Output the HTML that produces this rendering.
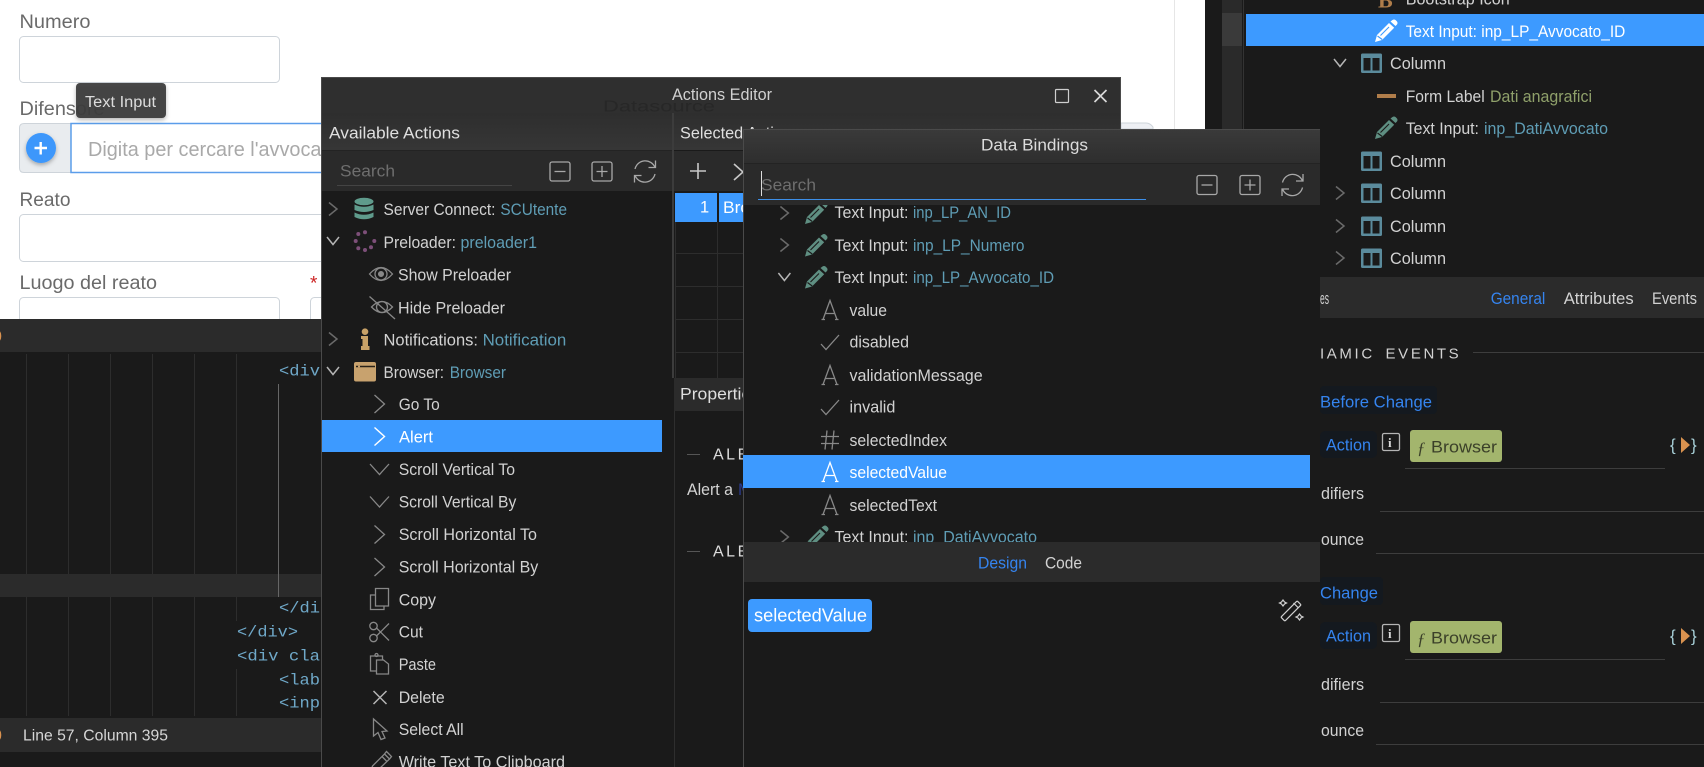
<!DOCTYPE html>
<html lang="it">
<head>
<meta charset="utf-8">
<title>Actions Editor</title>
<style>
html,body{margin:0;padding:0;background:#1a1a1a;width:1704px;height:767px;overflow:hidden}
svg{display:block}
text{font-family:"Liberation Sans",sans-serif;font-size:16.5px;fill:#d2d2d2;transform:translateY(-.7px)}
.n{fill:#5f9db5}
.m{font-family:"Liberation Mono",monospace;font-size:16px;fill:#6fa8c8}
.f{font-size:19px;fill:#6a6a6a;transform:none}
.b{fill:#3584ef}
.ic{fill:none;stroke:#a8a8a8;stroke-width:1.3}
.ch{fill:none;stroke:#6a6a6a;stroke-width:1.5}
.cho{fill:none;stroke:#b5b5b5;stroke-width:1.5}
.tl{fill:none;stroke:#888;stroke-width:1.3}
.ln{stroke:#3d3d3d;stroke-width:1}
.g{stroke:#2d2d2d;stroke-width:1}
</style>
</head>
<body>
<svg width="1704" height="767" viewBox="0 0 1704 767" xmlns="http://www.w3.org/2000/svg">
<defs>
<linearGradient id="tb" x1="0" y1="0" x2="0" y2="1"><stop offset="0" stop-color="#3a3a3a"/><stop offset="1" stop-color="#2e2e2e"/></linearGradient>
<linearGradient id="tb2" x1="0" y1="0" x2="0" y2="1"><stop offset="0" stop-color="#2e2e2e"/><stop offset="1" stop-color="#363636"/></linearGradient>
<filter id="sh" x="-20%" y="-20%" width="140%" height="150%"><feDropShadow dx="0" dy="2" stdDeviation="2" flood-color="#000" flood-opacity=".3"/></filter>
<g id="pencil">
<path fill="currentColor" d="M4.5-9.5 L6.5-11 Q8-12 9.5-11 L11-9.5 Q12-8 11-6.5 L9.5-5 Z"/>
<path fill="currentColor" d="M3-8 L8.2-3.2 L-4 9 L-11 11 L-9 4 Z"/>
<path fill="none" stroke="var(--b,#1a1a1a)" stroke-width="1.1" d="M-8.5 5 L-3.8 8.5 M3 -4 L-5.5 4.5"/>
</g>
<g id="col">
<rect x="-10.5" y="-9.5" width="21" height="19.5" rx="1.5" fill="#5b8b9c"/>
<rect x="-8" y="-5" width="7" height="12.5" fill="#1a1a1a"/>
<rect x="1" y="-5" width="7" height="12.5" fill="#1a1a1a"/>
</g>
<path id="cr" d="M-4-6.5 L4 0 L-4 6.5" />
<path id="cro" d="M-6-4 L0 3.5 L6-4" />
<path id="cr2" d="M-5-9 L5 0 L-5 9" />
<path id="cd2" d="M-9.5-5.5 L0 5 L9.5-5.5" />
<path id="A" d="M-7 9.5 L0-9.5 L7 9.5 M-4.6 3.5 H4.6 M-8.5 9.5 H-5 M5 9.5 H8.5" />
<path id="ck" d="M-9 2 L-4 7.5 L9-7" />
<path id="hash" d="M-3-9.5 L-5 9.5 M4-9.5 L2 9.5 M-9-3.5 H9 M-9 3.5 H9" />
<g id="minus"><rect x="-10" y="-9.5" width="20" height="19" rx="2"/><path d="M-5.5 0 H5.5"/></g>
<g id="plus"><rect x="-10" y="-9.5" width="20" height="19" rx="2"/><path d="M-5.5 0 H5.5 M0-5.5 V5.5"/></g>
<g id="ref"><path d="M10-4 A10.5 10.5 0 0 0-10-2.5 M10.5-11 V-4 H3.5 M-10 4 A10.5 10.5 0 0 0 10 2.5 M-10.5 11 V4 H-3.5"/></g>
</defs>

<!-- page background -->
<rect width="1704" height="767" fill="#1a1a1a"/>

<!-- white form -->
<rect x="0" y="0" width="1205" height="320" fill="#fff"/>
<path d="M1174.5 0 V130" stroke="#e6e6e6"/>
<text class="f" x="19.5" y="28" textLength="71" lengthAdjust="spacingAndGlyphs">Numero</text>
<rect x="19.5" y="36.5" width="260" height="46" rx="4" fill="#fff" stroke="#ced4da"/>
<text class="f" x="19.5" y="115" textLength="85" lengthAdjust="spacingAndGlyphs">Difensore</text>
<path d="M24 123.5 H71 V172.5 H24 Q19.5 172.5 19.5 168 V128 Q19.5 123.5 24 123.5Z" fill="#e9ecef" stroke="#ced4da"/>
<rect x="71" y="123.5" width="300" height="49" fill="#fff" stroke="#5b9dea" stroke-width="1.5"/>
<circle cx="41" cy="148" r="15" fill="#3d97fb" filter="url(#sh)"/>
<path d="M34.5 148 H47 M40.7 142 V154.5" stroke="#fff" stroke-width="2.4"/>
<text x="88" y="156.7" style="font-size:20px;fill:#a9a9a9" textLength="250" lengthAdjust="spacingAndGlyphs">Digita per cercare l'avvocato</text>
<text class="f" x="19.5" y="206" textLength="51" lengthAdjust="spacingAndGlyphs">Reato</text>
<rect x="19.5" y="214.5" width="340" height="47" rx="4" fill="#fff" stroke="#ced4da"/>
<text class="f" x="19.5" y="289" textLength="137.5" lengthAdjust="spacingAndGlyphs">Luogo del reato</text>
<rect x="19.5" y="297.5" width="260" height="46" rx="4" fill="#fff" stroke="#ced4da"/>
<text x="310" y="290" style="font-size:19px;fill:#c22">*</text>
<rect x="310.5" y="297.5" width="60" height="46" rx="4" fill="#fff" stroke="#ced4da"/>
<path d="M1121 129 V123 Q1121 123 1121 123 H1146 Q1150 123 1153 127 V129 Z" fill="#eef0f4" stroke="#ced4da"/>
<!-- tooltip -->
<rect x="76" y="83" width="90" height="35" rx="4" fill="#3c3c3c" fill-opacity=".94" filter="url(#sh)"/>
<text x="85" y="107.7" style="font-size:15.5px;fill:#dcdcdc" textLength="71" lengthAdjust="spacingAndGlyphs">Text Input</text>

<!-- code editor -->
<rect x="0" y="319" width="322" height="448" fill="#1a1a1a"/>
<rect x="0" y="319" width="322" height="33" fill="#2b2b2b"/>
<text x="-7" y="342" style="font-size:16px;fill:#d9924f">0</text>
<g class="g">
<path d="M26.5 354 V716 M68.5 354 V716 M110.5 354 V716 M152.5 354 V716 M194.5 354 V716 M236.5 354 V621 M236.5 669 V716"/>
</g>
<rect x="0" y="574" width="322" height="23" fill="#2b2b2b"/>
<path d="M278.5 384 V597" stroke="#666"/>
<text class="m" x="279" y="376" textLength="41" lengthAdjust="spacingAndGlyphs">&lt;div</text>
<text class="m" x="279" y="613" textLength="41" lengthAdjust="spacingAndGlyphs">&lt;/di</text>
<text class="m" x="237" y="637" textLength="61" lengthAdjust="spacingAndGlyphs">&lt;/div&gt;</text>
<text class="m" x="237" y="661" textLength="83" lengthAdjust="spacingAndGlyphs">&lt;div cla</text>
<text class="m" x="279" y="685" textLength="41" lengthAdjust="spacingAndGlyphs">&lt;lab</text>
<text class="m" x="279" y="708" textLength="41" lengthAdjust="spacingAndGlyphs">&lt;inp</text>
<rect x="0" y="718" width="322" height="34" fill="#2b2b2b"/>
<text x="-7" y="741" style="font-size:16px;fill:#d9924f">0</text>
<text x="23" y="741" style="font-size:15.5px;fill:#d6d6d6" textLength="145" lengthAdjust="spacingAndGlyphs">Line 57, Column 395</text>

<!-- right side panel: tree -->
<rect x="1205" y="0" width="499" height="767" fill="#1a1a1a"/>
<rect x="1222" y="0" width="20" height="130" fill="#2a2a2a"/>
<rect x="1222" y="13" width="20" height="33" fill="#3a3a3a"/>
<path d="M1243.5 0 V130" stroke="#333"/>
<rect x="1246" y="14" width="458" height="32" fill="#3d9aff"/>
<text x="1405.7" y="5" textLength="104" lengthAdjust="spacingAndGlyphs">Bootstrap Icon</text>
<text x="1378" y="8" style="font-size:22px;font-weight:bold;fill:#b07d4a;font-family:'Liberation Serif',serif">B</text>
<use href="#pencil" x="1386" y="31" style="color:#fff;--b:#3d9aff"/>
<text x="1405.7" y="37.6" style="fill:#fff" textLength="219.6" lengthAdjust="spacingAndGlyphs">Text Input: inp_LP_Avvocato_ID</text>
<use href="#cro" x="1340" y="63" class="cho"/>
<use href="#col" x="1371.5" y="63"/>
<text x="1390" y="69.6" textLength="56" lengthAdjust="spacingAndGlyphs">Column</text>
<rect x="1377" y="94" width="19" height="4" fill="#b07d4a"/>
<text x="1405.7" y="102.6" textLength="79" lengthAdjust="spacingAndGlyphs">Form Label</text>
<text x="1490" y="102.6" style="fill:#8fa06a" textLength="102" lengthAdjust="spacingAndGlyphs">Dati anagrafici</text>
<use href="#pencil" x="1386" y="128" style="color:#5f8f82"/>
<text x="1405.7" y="134.6" textLength="73.3" lengthAdjust="spacingAndGlyphs">Text Input:</text>
<text class="n" x="1484" y="134.6" textLength="124" lengthAdjust="spacingAndGlyphs">inp_DatiAvvocato</text>
<use href="#col" x="1371.5" y="161"/>
<text x="1390" y="167.6" textLength="56" lengthAdjust="spacingAndGlyphs">Column</text>
<use href="#cr" x="1340" y="193" class="ch"/>
<use href="#col" x="1371.5" y="193"/>
<text x="1390" y="199.6" textLength="56" lengthAdjust="spacingAndGlyphs">Column</text>
<use href="#cr" x="1340" y="226" class="ch"/>
<use href="#col" x="1371.5" y="226"/>
<text x="1390" y="232.6" textLength="56" lengthAdjust="spacingAndGlyphs">Column</text>
<use href="#cr" x="1340" y="258" class="ch"/>
<use href="#col" x="1371.5" y="258"/>
<text x="1390" y="264.6" textLength="56" lengthAdjust="spacingAndGlyphs">Column</text>

<!-- properties tabs -->
<rect x="1320" y="277" width="384" height="41" fill="#2b2b2b"/>
<text x="1320" y="304.5" textLength="9" lengthAdjust="spacingAndGlyphs">es</text>
<text class="b" x="1490.7" y="304.5" textLength="54.6" lengthAdjust="spacingAndGlyphs">General</text>
<text x="1563.7" y="304.5" textLength="70" lengthAdjust="spacingAndGlyphs">Attributes</text>
<text x="1652" y="304.5" textLength="45" lengthAdjust="spacingAndGlyphs">Events</text>
<text x="1320" y="359" style="font-size:15px;word-spacing:4px" textLength="138.7" lengthAdjust="spacing">IAMIC EVENTS</text>
<path d="M1473 352.5 H1704" class="ln"/>

<!-- events block 1 -->
<rect x="1320" y="386" width="117" height="28" rx="4" fill="#14191f"/>
<text class="b" x="1320" y="408" style="font-size:17px" textLength="112" lengthAdjust="spacingAndGlyphs">Before Change</text>
<rect x="1320" y="431" width="57" height="27" rx="5" fill="#14191f"/>
<text class="b" x="1326" y="451" textLength="45" lengthAdjust="spacingAndGlyphs">Action</text>
<rect x="1382.5" y="433.5" width="17" height="17" rx="1.5" fill="none" stroke="#b5b5b5" stroke-width="1.3"/>
<text x="1388" y="447.5" style="font-size:13px;font-weight:bold;fill:#d8d8d8;font-family:'Liberation Serif',serif">i</text>
<rect x="1410" y="430" width="92" height="32" rx="3" fill="#a3b56d"/>
<text x="1417" y="454" style="font-style:italic;font-family:'Liberation Serif',serif;font-size:17px;fill:#3b4029">ƒ</text>
<text x="1431" y="453" style="font-size:17px;fill:#3b4029" textLength="66" lengthAdjust="spacingAndGlyphs">Browser</text>
<path d="M1405 468.5 H1665" class="ln"/>
<text x="1670" y="451" style="font-size:17px;fill:#a8d0d8">{</text>
<path d="M1681 437 L1690 445 L1681 453 Z" fill="#d9924f"/>
<text x="1691" y="451" style="font-size:17px;fill:#a8d0d8">}</text>
<text x="1321" y="499.5" textLength="43" lengthAdjust="spacingAndGlyphs">difiers</text>
<path d="M1380 511.5 H1704" class="ln"/>
<text x="1321" y="545.5" textLength="43" lengthAdjust="spacingAndGlyphs">ounce</text>
<path d="M1376 553.5 H1704" class="ln"/>

<!-- events block 2 -->
<rect x="1320" y="577" width="63" height="28" rx="4" fill="#14191f"/>
<text class="b" x="1320" y="599" style="font-size:17px" textLength="58" lengthAdjust="spacingAndGlyphs">Change</text>
<rect x="1320" y="622" width="57" height="27" rx="5" fill="#14191f"/>
<text class="b" x="1326" y="642" textLength="45" lengthAdjust="spacingAndGlyphs">Action</text>
<rect x="1382.5" y="624.5" width="17" height="17" rx="1.5" fill="none" stroke="#b5b5b5" stroke-width="1.3"/>
<text x="1388" y="638.5" style="font-size:13px;font-weight:bold;fill:#d8d8d8;font-family:'Liberation Serif',serif">i</text>
<rect x="1410" y="621" width="92" height="32" rx="3" fill="#a3b56d"/>
<text x="1417" y="645" style="font-style:italic;font-family:'Liberation Serif',serif;font-size:17px;fill:#3b4029">ƒ</text>
<text x="1431" y="644" style="font-size:17px;fill:#3b4029" textLength="66" lengthAdjust="spacingAndGlyphs">Browser</text>
<path d="M1405 659.5 H1665" class="ln"/>
<text x="1670" y="642" style="font-size:17px;fill:#a8d0d8">{</text>
<path d="M1681 628 L1690 636 L1681 644 Z" fill="#d9924f"/>
<text x="1691" y="642" style="font-size:17px;fill:#a8d0d8">}</text>
<text x="1321" y="690.5" textLength="43" lengthAdjust="spacingAndGlyphs">difiers</text>
<path d="M1380 702.5 H1704" class="ln"/>
<text x="1321" y="736.5" textLength="43" lengthAdjust="spacingAndGlyphs">ounce</text>
<path d="M1376 744.5 H1704" class="ln"/>

<!-- ACTIONS EDITOR DIALOG -->
<rect x="321" y="77" width="799" height="690" fill="#1a1a1a"/>
<rect x="321" y="77" width="799" height="36" fill="#2f2f2f"/>
<path d="M321 77.5 H1120" stroke="#4a4a4a"/>
<path d="M321.5 77 V767 M1120.5 77 V130" stroke="#4a4a4a"/>
<text x="672" y="100.5" style="fill:#d0d0d0" textLength="100" lengthAdjust="spacingAndGlyphs">Actions Editor</text>
<rect x="1055.5" y="89.5" width="13" height="13" rx="1" fill="none" stroke="#cfcfcf" stroke-width="1.2"/>
<path d="M1094.5 90 L1106.5 102 M1106.5 90 L1094.5 102" stroke="#d8d8d8" stroke-width="1.7"/>
<!-- left pane header -->
<rect x="322" y="113" width="350" height="37" fill="url(#tb2)"/>
<path d="M322 150.5 H672" stroke="#232323"/>
<text x="329" y="139" style="font-size:17px;fill:#dfdfdf" textLength="131" lengthAdjust="spacingAndGlyphs">Available Actions</text>
<rect x="322" y="151" width="350" height="40" fill="#2a2a2a"/>
<text x="340" y="177" style="font-size:17px;fill:#6e6e6e" textLength="55" lengthAdjust="spacingAndGlyphs">Search</text>
<path d="M337 185.5 H512" stroke="#444"/>
<use href="#minus" x="560" y="171.5" class="ic"/>
<use href="#plus" x="602" y="171.5" class="ic"/>
<use href="#ref" x="645" y="171.5" class="ic"/>

<!-- available tree -->
<use href="#cr" x="333" y="209" class="ch"/>
<g transform="translate(364,209)" fill="#5f9b8c">
<ellipse cx="0" cy="-7.5" rx="9.5" ry="3.7"/>
<path d="M-9.5-4.5 Q0 0 9.5-4.5 V1 Q0 5 -9.5 1Z"/>
<path d="M-9.5 3.5 Q0 8 9.5 3.5 V8 Q0 12.5 -9.5 8Z"/>
</g>
<text x="383.5" y="215.5" textLength="112" lengthAdjust="spacingAndGlyphs">Server Connect:</text>
<text class="n" x="500.4" y="215.5" textLength="66.6" lengthAdjust="spacingAndGlyphs">SCUtente</text>

<use href="#cro" x="333" y="241" class="cho"/>
<g fill="#7d4f79">
<circle cx="358.3" cy="234" r="2"/><circle cx="365" cy="232.3" r="2"/>
<circle cx="355.7" cy="241" r="2"/><circle cx="374.3" cy="241" r="2"/>
<circle cx="358.3" cy="248.3" r="2"/><circle cx="371" cy="247.3" r="2"/><circle cx="365" cy="250" r="2"/>
</g>
<text x="383.5" y="248.5" textLength="72.5" lengthAdjust="spacingAndGlyphs">Preloader:</text>
<text class="n" x="460.5" y="248.5" textLength="76.5" lengthAdjust="spacingAndGlyphs">preloader1</text>

<g transform="translate(381,274)" class="tl">
<path d="M-11.5 0 Q0-13 11.5 0 Q0 13-11.5 0Z"/><circle r="6"/><circle r="2.4" fill="#888"/>
</g>
<text x="398" y="281" textLength="113" lengthAdjust="spacingAndGlyphs">Show Preloader</text>
<g transform="translate(382,307)" class="tl">
<path d="M-10.5 0 Q0-11 10.5 0 Q0 11-10.5 0Z"/><circle r="5.5"/><path d="M-12.5-10.5 L13 12"/>
</g>
<text x="398" y="314" textLength="107" lengthAdjust="spacingAndGlyphs">Hide Preloader</text>

<use href="#cr" x="333" y="339" class="ch"/>
<g fill="#c9a267">
<circle cx="365" cy="331.7" r="3.3"/>
<path d="M361 336 H368 V346 H369.5 V350 H361 V346 H362.5 V339 H361Z"/>
</g>
<text x="383.5" y="346" textLength="94.5" lengthAdjust="spacingAndGlyphs">Notifications:</text>
<text class="n" x="482.6" y="346" textLength="83.7" lengthAdjust="spacingAndGlyphs">Notification</text>

<use href="#cro" x="333" y="371" class="cho"/>
<rect x="354" y="362" width="22" height="19.5" rx="2" fill="#c8a26e"/>
<path d="M356 366.5 H375" stroke="#2a2218" stroke-width="1.6"/>
<path d="M358 366.5 H360" stroke="#c8a26e" stroke-width="1.6"/>
<text x="383.5" y="378.7" textLength="60.5" lengthAdjust="spacingAndGlyphs">Browser:</text>
<text class="n" x="449.7" y="378.7" textLength="56.3" lengthAdjust="spacingAndGlyphs">Browser</text>

<use href="#cr2" x="379.5" y="404" class="tl"/>
<text x="398.7" y="410.7" textLength="41" lengthAdjust="spacingAndGlyphs">Go To</text>

<rect x="322" y="420" width="340" height="32" fill="#3d9aff"/>
<use href="#cr2" x="379.5" y="436.5" style="fill:none;stroke:#fff;stroke-width:1.4"/>
<text x="399" y="443" style="fill:#fff" textLength="34" lengthAdjust="spacingAndGlyphs">Alert</text>

<use href="#cd2" x="379.5" y="469.5" class="tl"/>
<text x="398.7" y="475.7" textLength="116.3" lengthAdjust="spacingAndGlyphs">Scroll Vertical To</text>
<use href="#cd2" x="379.5" y="502" class="tl"/>
<text x="398.7" y="508" textLength="117.6" lengthAdjust="spacingAndGlyphs">Scroll Vertical By</text>
<use href="#cr2" x="379.5" y="534.5" class="tl"/>
<text x="398.7" y="540.5" textLength="138.3" lengthAdjust="spacingAndGlyphs">Scroll Horizontal To</text>
<use href="#cr2" x="379.5" y="567" class="tl"/>
<text x="398.7" y="573" textLength="139.6" lengthAdjust="spacingAndGlyphs">Scroll Horizontal By</text>

<g class="tl" transform="translate(379.5,599)">
<path d="M-4-10.5 H9 V7 H-4Z M-4-4 H-9 V10.5 H4.5 V7"/>
</g>
<text x="398.7" y="606" textLength="37.3" lengthAdjust="spacingAndGlyphs">Copy</text>
<g class="tl" transform="translate(379.5,632)">
<circle cx="-6" cy="-6" r="3.7"/><circle cx="-6" cy="6" r="3.7"/><path d="M-3-4 L9.5 8.5 M-3 4 L9.5-8.5"/>
</g>
<text x="398.7" y="638" textLength="24.3" lengthAdjust="spacingAndGlyphs">Cut</text>
<g class="tl" transform="translate(379.5,664)">
<path d="M-3-8 H3 V-4 M-3-8 H-9 V7 H-3 M-3-4 H4 L9-0 V10 H-3Z"/><circle cx="-3" cy="-9" r="1.5"/>
</g>
<text x="398.7" y="670.5" textLength="37.3" lengthAdjust="spacingAndGlyphs">Paste</text>
<path d="M373.5 691 L386.5 704 M386.5 691 L373.5 704" stroke="#b5b5b5" stroke-width="1.5"/>
<text x="398.7" y="703.5" textLength="46" lengthAdjust="spacingAndGlyphs">Delete</text>
<path class="tl" d="M373.5 719 L373.5 736 L378 732.5 L381 739.5 L385 738 L382 731.5 L387 731 Z"/>
<text x="398.7" y="735.5" textLength="65" lengthAdjust="spacingAndGlyphs">Select All</text>
<g class="tl" transform="translate(379.5,761)">
<path d="M-9 11 L-7 5 L5-7 L10-2 L-2 9.5 Z M2.5-4.5 L7.5 0.5 M7-9.5 L12-4.5 L10-2 L5-7Z"/>
</g>
<text x="398.7" y="768" textLength="166.3" lengthAdjust="spacingAndGlyphs">Write Text To Clipboard</text>

<!-- selected actions pane -->
<rect x="672" y="113" width="2" height="265" fill="#3c3c3c"/>
<path d="M674.5 411 V767" stroke="#2e2e2e"/>
<rect x="674" y="113" width="446" height="37" fill="url(#tb2)"/>
<text x="680" y="139" style="font-size:17px;fill:#dfdfdf" textLength="120" lengthAdjust="spacingAndGlyphs">Selected Actions</text>
<text x="603" y="112" style="font-size:16px;fill:#272727" textLength="112" lengthAdjust="spacingAndGlyphs">Datasource</text>
<rect x="674" y="151" width="446" height="40" fill="#2a2a2a"/>
<path d="M698 163 V179 M690 171 H706" stroke="#c8c8c8" stroke-width="1.6"/>
<path d="M734 164 L743 172 L734 180" fill="none" stroke="#c8c8c8" stroke-width="1.6"/>
<rect x="675" y="193" width="42" height="29" fill="#3d9aff"/>
<rect x="719" y="193" width="40" height="29" fill="#3d9aff"/>
<text x="700" y="213" style="fill:#fff">1</text>
<text x="723" y="213.5" style="fill:#fff;font-size:17px" textLength="27" lengthAdjust="spacingAndGlyphs">Bro</text>
<g class="g"><path d="M675 253.5 H743 M675 286.5 H743 M675 319.5 H743 M675 352.5 H743 M717.5 222 V378 M675.5 222 V378"/></g>
<rect x="674" y="378" width="446" height="33" fill="#2b2b2b"/>
<text x="680" y="400" style="font-size:17px;fill:#dfdfdf" textLength="80" lengthAdjust="spacingAndGlyphs">Properties</text>
<path d="M687 454.5 H700" stroke="#555"/>
<text x="713" y="460" style="font-size:16px;fill:#dcdcdc;letter-spacing:2.5px">ALERT</text>
<text x="687" y="495.5" textLength="46" lengthAdjust="spacingAndGlyphs">Alert a</text>
<text x="738" y="495.5" style="fill:#2a3a8a">M</text>
<path d="M687 551.5 H700" stroke="#555"/>
<text x="713" y="557" style="font-size:16px;fill:#dcdcdc;letter-spacing:2.5px">ALERT</text>

<!-- DATA BINDINGS DIALOG -->
<rect x="743" y="129" width="577" height="638" fill="#1a1a1a"/>
<path d="M743.5 129 V767" stroke="#4a4a4a"/>

<!-- binding rows -->
<use href="#cr" x="784.4" y="213" class="ch"/>
<use href="#pencil" x="816" y="213" style="color:#5f8f82"/>
<text x="834.5" y="218.7" textLength="74" lengthAdjust="spacingAndGlyphs">Text Input:</text>
<text class="n" x="913" y="218.7" textLength="98" lengthAdjust="spacingAndGlyphs">inp_LP_AN_ID</text>

<use href="#cr" x="784.4" y="245" class="ch"/>
<use href="#pencil" x="816" y="245.5" style="color:#5f8f82"/>
<text x="834.5" y="251.7" textLength="74" lengthAdjust="spacingAndGlyphs">Text Input:</text>
<text class="n" x="913" y="251.7" textLength="111.5" lengthAdjust="spacingAndGlyphs">inp_LP_Numero</text>

<use href="#cro" x="784.4" y="277" class="cho"/>
<use href="#pencil" x="816" y="277.5" style="color:#5f8f82"/>
<text x="834.5" y="283.7" textLength="74" lengthAdjust="spacingAndGlyphs">Text Input:</text>
<text class="n" x="913" y="283.7" textLength="141" lengthAdjust="spacingAndGlyphs">inp_LP_Avvocato_ID</text>

<use href="#A" x="830" y="310" class="tl"/>
<text x="849.5" y="316.7" textLength="37.5" lengthAdjust="spacingAndGlyphs">value</text>
<use href="#ck" x="830" y="342" class="tl"/>
<text x="849.5" y="348.3" textLength="59.5" lengthAdjust="spacingAndGlyphs">disabled</text>
<use href="#A" x="830" y="375" class="tl"/>
<text x="849.5" y="381.5" textLength="133.2" lengthAdjust="spacingAndGlyphs">validationMessage</text>
<use href="#ck" x="830" y="407" class="tl"/>
<text x="849.5" y="413.3" textLength="45.9" lengthAdjust="spacingAndGlyphs">invalid</text>
<use href="#hash" x="830" y="440" class="tl"/>
<text x="849.5" y="446.5" textLength="97.5" lengthAdjust="spacingAndGlyphs">selectedIndex</text>

<rect x="743" y="455" width="567" height="33" fill="#3d9aff"/>
<use href="#A" x="830" y="472" style="fill:none;stroke:#fff;stroke-width:1.3"/>
<text x="849.5" y="478.5" style="fill:#fff" textLength="97.5" lengthAdjust="spacingAndGlyphs">selectedValue</text>
<use href="#A" x="830" y="505" class="tl"/>
<text x="849.5" y="511.5" textLength="87.5" lengthAdjust="spacingAndGlyphs">selectedText</text>
<use href="#cr" x="784.4" y="537" class="ch"/>
<use href="#pencil" x="817" y="537" style="color:#5f8f82"/>
<text x="834.5" y="543" textLength="74" lengthAdjust="spacingAndGlyphs">Text Input:</text>
<text class="n" x="913" y="543" textLength="124" lengthAdjust="spacingAndGlyphs">inp_DatiAvvocato</text>

<!-- bindings header -->
<rect x="744" y="129" width="576" height="34" fill="url(#tb)"/>
<path d="M743 129.5 H1320" stroke="#4a4a4a"/>
<path d="M744 163.5 H1320" stroke="#232323"/>
<text x="981" y="151" style="fill:#dcdcdc" textLength="107" lengthAdjust="spacingAndGlyphs">Data Bindings</text>
<rect x="744" y="164" width="576" height="41" fill="#2a2a2a"/>
<path d="M761.5 171 V196" stroke="#ddd"/>
<text x="761" y="191" style="font-size:17px;fill:#6e6e6e" textLength="55" lengthAdjust="spacingAndGlyphs">Search</text>
<path d="M758 199.5 H1146" stroke="#3d8fe8"/>
<use href="#minus" x="1207" y="185" class="ic"/>
<use href="#plus" x="1250" y="185" class="ic"/>
<use href="#ref" x="1292.5" y="185" class="ic"/>

<!-- design/code bar -->
<rect x="744" y="542" width="576" height="40" fill="#2b2b2b"/>
<text class="b" x="978" y="569" textLength="49" lengthAdjust="spacingAndGlyphs">Design</text>
<text x="1045" y="569" textLength="37" lengthAdjust="spacingAndGlyphs">Code</text>
<rect x="748" y="599" width="124" height="33" rx="4" fill="#3d9aff"/>
<text x="754" y="622" style="font-size:18.5px;fill:#fff" textLength="113" lengthAdjust="spacingAndGlyphs">selectedValue</text>
<g transform="translate(1291,611)" fill="none" stroke="#d0d0d0" stroke-width="1.2">
<rect x="-2.8" y="-11.5" width="5.6" height="23" rx="1" transform="rotate(45)"/>
<path d="M2.5-8 L7.5-3"/>
<path d="M-8-11 L-6.5-9 L-4.5-8 L-6.5-7 L-8-5 L-9.5-7 L-11.5-8 L-9.5-9Z M8.5 3 L10 5 L12 6 L10 7 L8.5 9 L7 7 L5 6 L7 5Z"/>
</g>
</svg>
</body>
</html>
